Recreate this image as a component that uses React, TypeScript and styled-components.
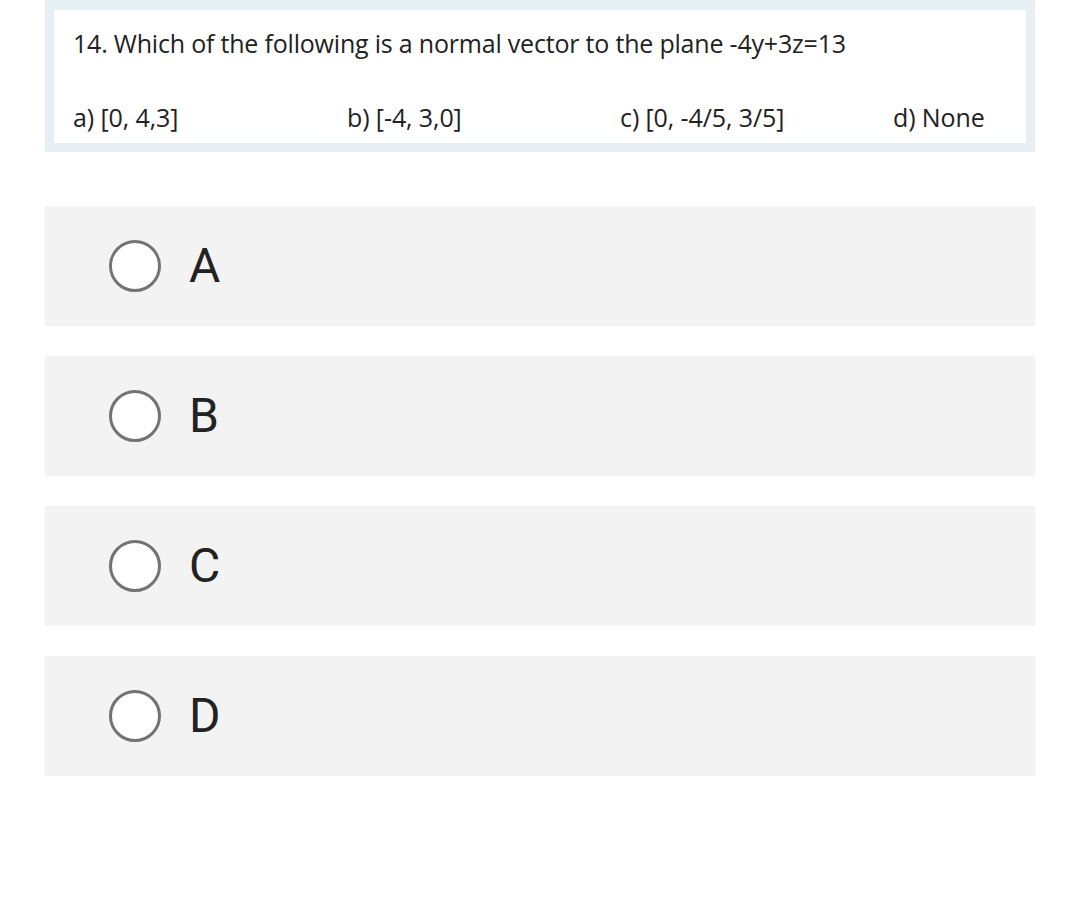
import React from "react";
import styled, { createGlobalStyle } from "styled-components";

const Global = createGlobalStyle`
  html, body { margin: 0; padding: 0; background: #ffffff; }
  body { font-family: Roboto, "Liberation Sans", sans-serif; }
`;

const Page = styled.div`
  width: 1080px;
  height: 915px;
  padding: 0 45px;
  box-sizing: border-box;
  display: flex;
  flex-direction: column;
`;

const ImageFrame = styled.div`
  background: #e6eff1;
  padding: 10px 9px 9px 9px;
  height: 152px;
  box-sizing: border-box;
`;

const ImageInner = styled.div`
  background: #ffffff;
  height: 100%;
  box-sizing: border-box;
  padding: 16px 0 0 19px;
  font-family: "Open Sans", "Liberation Sans", sans-serif;
  color: #222;
`;

const Question = styled.div`
  font-size: 25px;
  line-height: 34px;
  letter-spacing: -0.2px;
`;

const Choices = styled.div`
  display: grid;
  grid-template-columns: 274px 273px 273px auto;
  margin-top: 40px;
  font-size: 25px;
  line-height: 34px;
  letter-spacing: -0.1px;
`;

const Options = styled.div`
  display: flex;
  flex-direction: column;
  gap: 30px;
  margin-top: 54px;
`;

const Card = styled.label`
  height: 120px;
  background: #f3f3f3;
  display: flex;
  align-items: center;
  padding-left: 64px;
  box-sizing: border-box;
  cursor: pointer;
`;

const Radio = styled.span`
  width: 52px;
  height: 52px;
  border-radius: 50%;
  border: 3px solid #737373;
  background: #ffffff;
  box-sizing: border-box;
  flex: none;
`;

const Letter = styled.span`
  margin-left: 28px;
  font-family: Roboto, "Liberation Sans", sans-serif;
  font-size: 48px;
  color: #222;
  line-height: 1;
`;

export default function App() {
  return (
    <>
      <Global />
      <Page>
        <ImageFrame>
          <ImageInner>
            <Question>14. Which of the following is a normal vector to the plane -4y+3z=13</Question>
            <Choices>
              <span>a) [0, 4,3]</span>
              <span>b) [-4, 3,0]</span>
              <span>c) [0, -4/5, 3/5]</span>
              <span>d) None</span>
            </Choices>
          </ImageInner>
        </ImageFrame>
        <Options>
          {["A", "B", "C", "D"].map((l) => (
            <Card key={l}>
              <Radio />
              <Letter>{l}</Letter>
            </Card>
          ))}
        </Options>
      </Page>
    </>
  );
}
